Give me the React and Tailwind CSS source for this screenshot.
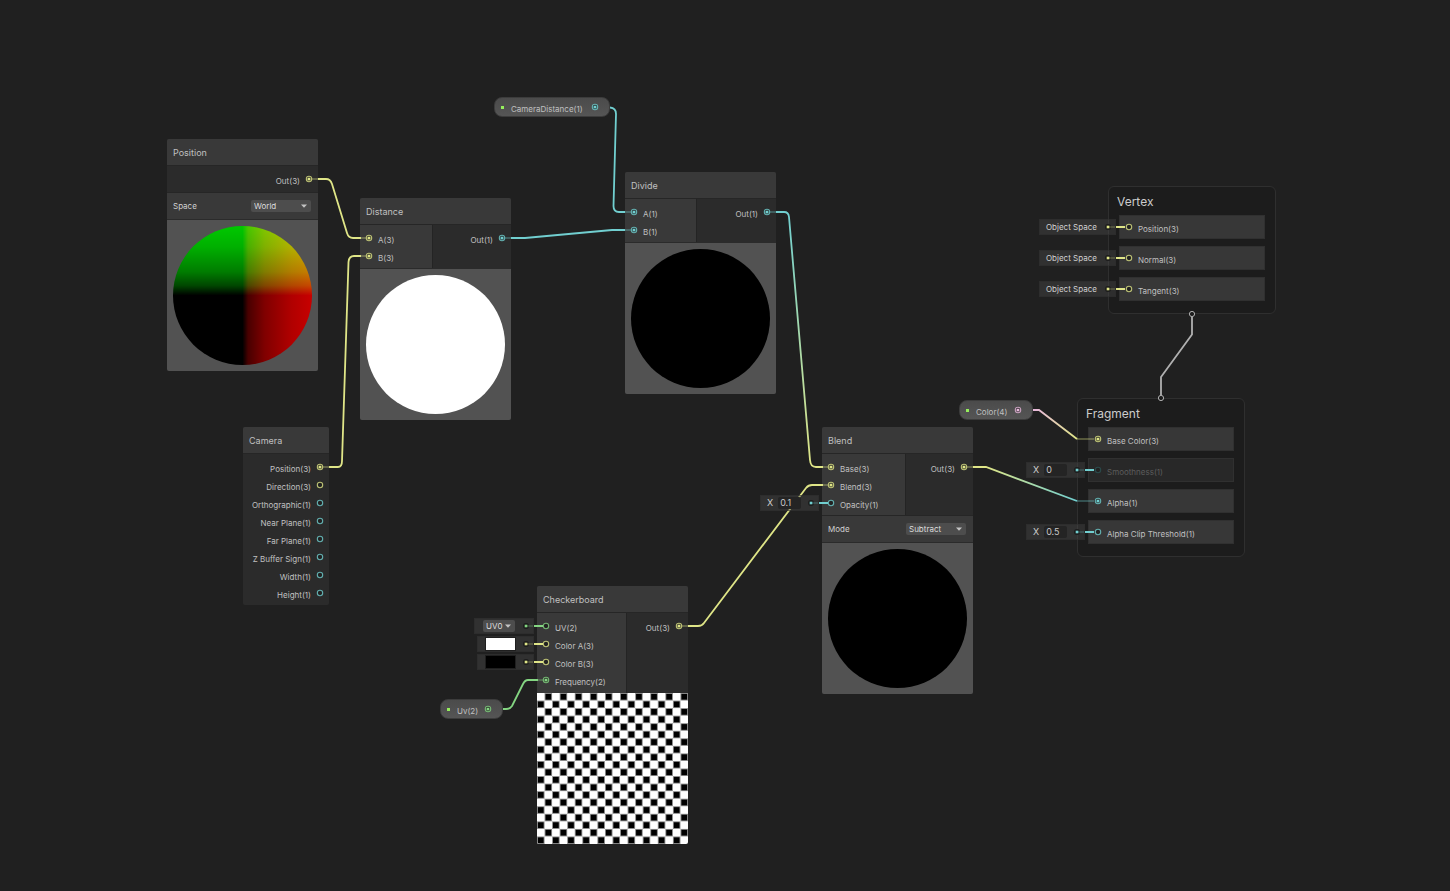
import React from "react";

const COLORS = {
  yellow: "#dfe587",
  teal: "#71cfd0",
  green: "#84d682",
  pink: "#e9b9dd",
};

function PortDot({ color, state = "open" }) {
  return (
    <svg viewBox="0 0 8 8" className="size-2 shrink-0">
      <circle
        cx="4"
        cy="4"
        r="2.7"
        fill="#222222"
        stroke={state === "off" ? "#2b4a4b" : COLORS[color]}
        strokeWidth="1.1"
        strokeOpacity={state === "off" ? 1 : 0.8}
      />
      {state === "linked" && <circle cx="4" cy="4" r="1.6" fill={COLORS[color]} />}
    </svg>
  );
}

function InPort({ label, color, state }) {
  return (
    <div className="flex h-[18px] items-center gap-[5px] pl-[5px]">
      <PortDot color={color} state={state} />
      <span className="pt-[3px] leading-3">{label}</span>
    </div>
  );
}

function OutPort({ label, color, state }) {
  return (
    <div className="flex h-[18px] items-center justify-end gap-[5px] pr-[5px]">
      <span className="pt-[3px] leading-3">{label}</span>
      <PortDot color={color} state={state} />
    </div>
  );
}

function Dropdown({ id, label, options, className }) {
  return (
    <span className="relative flex">
      <select
        id={id}
        aria-label={label}
        className={`h-3 appearance-none rounded-xs bg-[#4d4d4d] pl-[3px] text-[8px] leading-3 text-[#dcdcdc] outline-none ${className}`}
      >
        {options.map((option) => (
          <option key={option}>{option}</option>
        ))}
      </select>
      <svg viewBox="0 0 6 4" className="pointer-events-none absolute top-1 right-1 h-1 w-1.5">
        <path d="M0 0.5h6L3 3.8z" fill="#c4c4c4" />
      </svg>
    </span>
  );
}

function Node({ title, place, width = "w-[151px]", split, inputs = [], outputs = [], portsHeight = "", field, children }) {
  return (
    <section className={`absolute ${place} ${width} overflow-hidden rounded-xs bg-[#2b2b2b] text-[8px] text-[#c0c0c0]`}>
      <h2 className="flex h-[27px] items-center border-b border-[#262626] bg-[#393939] px-1.5 pt-px text-[9px]">
        {title}
      </h2>
      <div className={`flex ${portsHeight}`}>
        {inputs.length > 0 && (
          <div className={`shrink-0 border-r border-[#242424] bg-[#393939] pt-1 pb-[3px] ${split}`}>
            {inputs.map((port) => (
              <InPort key={port.label} {...port} />
            ))}
          </div>
        )}
        <div className="grow pt-1 pb-[3px]">
          {outputs.map((port) => (
            <OutPort key={port.label} {...port} />
          ))}
        </div>
      </div>
      {field && (
        <div className="flex h-[27px] items-center justify-between border-t border-[#262626] bg-[#393939] pr-[7px] pl-1.5 text-[#d0d0d0]">
          <label htmlFor={field.id}>{field.label}</label>
          <Dropdown id={field.id} options={field.options} className="w-[60px]" />
        </div>
      )}
      {children}
    </section>
  );
}

function Preview({ className }) {
  return (
    <div className="flex h-[152px] items-center justify-center border-t border-[#2b2b2b] bg-[#525252]">
      <div className={`size-[139px] rounded-full ${className}`} />
    </div>
  );
}

function CheckerPreview() {
  return (
    <svg className="block h-[151px] w-full bg-white">
      <defs>
        <pattern id="checker" width="15.1" height="15.1" patternUnits="userSpaceOnUse">
          <g stroke="#8a8a8a" strokeWidth="0.8">
            <rect x="8.1" y="0.5" width="6.6" height="6.6" />
            <rect x="0.5" y="8.1" width="6.6" height="6.6" />
          </g>
        </pattern>
      </defs>
      <rect width="100%" height="100%" fill="url(#checker)" />
    </svg>
  );
}

function Pill({ label, color, place, width }) {
  return (
    <div
      className={`absolute ${place} ${width} flex h-5 items-center justify-between rounded-lg border border-[#3c3c3c] bg-linear-to-b from-[#4b4b4b] to-[#555555] pr-2.5 pl-1.5 text-[8px] text-[#c0c0c0]`}
    >
      <span className="flex items-center gap-[7px]">
        <span className="size-[3px] bg-[#95ee5c]" />
        <span className="pt-[3px] leading-3">{label}</span>
      </span>
      <PortDot color={color} state="linked" />
    </div>
  );
}

// Inline value box that feeds an unconnected input from the left.
function Widget({ place, width, color, children }) {
  return (
    <div className={`absolute ${place} flex items-center`}>
      <div
        className={`flex h-4 items-center justify-between border border-[#2a2a2a]/50 bg-[#4c4c4c]/40 text-[8px] text-[#d0d0d0] ${width}`}
      >
        {children}
        <svg viewBox="0 0 10 6" className="h-1.5 w-2.5 shrink-0">
          <circle cx="3" cy="3" r="3" fill="#1c1c1c" />
          <path d="M4 3h6" stroke={COLORS[color]} strokeWidth="1" opacity="0.4" />
          <rect x="1.7" y="1.7" width="2.6" height="2.6" fill={COLORS[color]} />
        </svg>
      </div>
      <svg viewBox="0 0 9 2" className="h-0.5 w-[9px]">
        <path d="M0 1h9" stroke={COLORS[color]} strokeWidth="2" />
      </svg>
    </div>
  );
}

function NumberWidget({ place, label, value }) {
  return (
    <Widget place={place} width="w-[59px] pl-1.5" color="teal">
      <label className="flex items-center gap-[5px] text-[9px]">
        X
        <input
          aria-label={label}
          defaultValue={value}
          className="h-3 w-[23px] rounded-xs bg-[#242424] pl-0.5 text-[9px] leading-3 text-[#c8c8c8] outline-none"
        />
      </label>
    </Widget>
  );
}

function SpaceWidget({ place }) {
  return (
    <Widget place={place} width="w-[77px] pl-1.5" color="yellow">
      <span>Object Space</span>
    </Widget>
  );
}

function Block({ title, place, rows }) {
  return (
    <section className={`absolute ${place} w-[168px] rounded-md border border-[#2f2f2f] bg-[#1c1c1c] px-2.5 pb-3`}>
      <h2 className="-ml-0.5 flex h-7 items-center pt-0.5 text-[12px] text-[#cccccc]">{title}</h2>
      <div className="flex flex-col gap-[7px] text-[8px] text-[#c0c0c0]">
        {rows.map((row) => (
          <div
            key={row.label}
            className={`flex h-6 items-center border border-[#303030] ${
              row.state === "off" ? "bg-[#282828] text-[#5c5c5c]" : "bg-[#373737]"
            }`}
          >
            <InPort {...row} />
          </div>
        ))}
      </div>
    </section>
  );
}

const EDGES = [
  { color: COLORS.yellow, d: "M318 179H326Q330.5 179 332 184L347 233Q348.5 238 353 238H361" },
  { color: COLORS.yellow, d: "M329 467H338Q342 467 342 461L348.5 262Q349 256 354 256H361" },
  { color: COLORS.teal, d: "M511 238H525L612 230H625" },
  { color: COLORS.teal, d: "M610 107.5Q616 108 616 114L613.5 206Q613.5 212 619 212H625" },
  { color: "url(#tealToYellow)", d: "M776 212H784Q788.5 212 789 217L810 460Q810.5 467 816 467H823" },
  { color: COLORS.yellow, d: "M688 626H698Q702 626 704 623L806 488Q808.500 485 812 485H823" },
  { color: COLORS.green, d: "M503 709H506Q510 709 512 706L523 684Q525 680 528 680H538" },
  { color: "url(#pinkToYellow)", d: "M1033 410H1039L1077 439" },
  { color: "url(#yellowToTeal)", d: "M973 467H986L1077 501" },
];

// The part of an edge that runs across a node, up to its port.
const STUBS = [
  { color: COLORS.yellow, d: "M312 179H318M361 238H366M361 256H366M323 467H329" },
  { color: COLORS.teal, d: "M505 238H511M625 230H631M625 212H631M770 212H776M1077 501H1094" },
  { color: COLORS.yellow, d: "M823 467H828M823 485H828M682 626H688M967 467H973M1077 439H1094" },
  { color: COLORS.green, d: "M538 680H543" },
];

function Edges() {
  return (
    <svg className="pointer-events-none absolute inset-0 h-full w-full" fill="none">
      <defs>
        <linearGradient id="tealToYellow" gradientUnits="userSpaceOnUse" x1="789" y1="212" x2="810" y2="467">
          <stop offset="0" stopColor={COLORS.teal} />
          <stop offset="1" stopColor={COLORS.yellow} />
        </linearGradient>
        <linearGradient id="pinkToYellow" gradientUnits="userSpaceOnUse" x1="1033" y1="410" x2="1077" y2="438">
          <stop offset="0" stopColor={COLORS.pink} />
          <stop offset="1" stopColor={COLORS.yellow} />
        </linearGradient>
        <linearGradient id="yellowToTeal" gradientUnits="userSpaceOnUse" x1="986" y1="466" x2="1077" y2="500">
          <stop offset="0" stopColor={COLORS.yellow} />
          <stop offset="1" stopColor={COLORS.teal} />
        </linearGradient>
      </defs>
      {EDGES.map((edge) => (
        <path key={edge.d} d={edge.d} stroke={edge.color} strokeWidth="1.8" />
      ))}
      {STUBS.map((stub) => (
        <path key={stub.d} d={stub.d} stroke={stub.color} strokeWidth="1.6" className="opacity-40" />
      ))}
      <g stroke="#b0b0b0">
        <path d="M1192 317V334.5L1161 377V395" strokeWidth="1.8" />
        <circle cx="1192" cy="314" r="2.6" fill="#1c1c1c" />
        <circle cx="1161" cy="398" r="2.6" fill="#1c1c1c" />
      </g>
    </svg>
  );
}

export default function App() {
  return (
    <main className="relative min-h-screen w-full overflow-hidden bg-[#202020] font-['Inter',sans-serif]">
      <Node
        title="Position"
        place="top-[139px] left-[167px]"
        portsHeight="min-h-[26px]"
        outputs={[{ label: "Out(3)", color: "yellow", state: "linked" }]}
        field={{ id: "space", label: "Space", options: ["World", "Object", "View", "Tangent"] }}
      >
        <Preview className="bg-[linear-gradient(to_bottom,#00c800,#00b000_15%,#007c00_33%,#004600_43%,#000_50%),linear-gradient(to_right,#000_50%,#480000_54%,#800000_66%,#b00000_85%,#c80000)] bg-blend-screen" />
      </Node>

      <Node
        title="Distance"
        place="top-[198px] left-[360px]"
        split="w-[73px]"
        inputs={[
          { label: "A(3)", color: "yellow", state: "linked" },
          { label: "B(3)", color: "yellow", state: "linked" },
        ]}
        outputs={[{ label: "Out(1)", color: "teal", state: "linked" }]}
      >
        <Preview className="bg-white" />
      </Node>

      <Node
        title="Divide"
        place="top-[172px] left-[625px]"
        split="w-[72px]"
        inputs={[
          { label: "A(1)", color: "teal", state: "linked" },
          { label: "B(1)", color: "teal", state: "linked" },
        ]}
        outputs={[{ label: "Out(1)", color: "teal", state: "linked" }]}
      >
        <Preview className="bg-black" />
      </Node>

      <Node
        title="Camera"
        place="top-[427px] left-[243px]"
        width="w-[86px]"
        outputs={[
          { label: "Position(3)", color: "yellow", state: "linked" },
          { label: "Direction(3)", color: "yellow" },
          { label: "Orthographic(1)", color: "teal" },
          { label: "Near Plane(1)", color: "teal" },
          { label: "Far Plane(1)", color: "teal" },
          { label: "Z Buffer Sign(1)", color: "teal" },
          { label: "Width(1)", color: "teal" },
          { label: "Height(1)", color: "teal" },
        ]}
      />

      <Node
        title="Blend"
        place="top-[427px] left-[822px]"
        split="w-[84px]"
        inputs={[
          { label: "Base(3)", color: "yellow", state: "linked" },
          { label: "Blend(3)", color: "yellow", state: "linked" },
          { label: "Opacity(1)", color: "teal" },
        ]}
        outputs={[{ label: "Out(3)", color: "yellow", state: "linked" }]}
        field={{ id: "mode", label: "Mode", options: ["Subtract", "Multiply", "Overlay", "Screen"] }}
      >
        <Preview className="bg-black" />
      </Node>

      <Node
        title="Checkerboard"
        place="top-[586px] left-[537px]"
        split="w-[90px]"
        portsHeight="min-h-20"
        inputs={[
          { label: "UV(2)", color: "green" },
          { label: "Color A(3)", color: "yellow" },
          { label: "Color B(3)", color: "yellow" },
          { label: "Frequency(2)", color: "green", state: "linked" },
        ]}
        outputs={[{ label: "Out(3)", color: "yellow", state: "linked" }]}
      >
        <CheckerPreview />
      </Node>

      <Block
        title="Vertex"
        place="top-[186px] left-[1108px]"
        rows={[
          { label: "Position(3)", color: "yellow" },
          { label: "Normal(3)", color: "yellow" },
          { label: "Tangent(3)", color: "yellow" },
        ]}
      />
      <Block
        title="Fragment"
        place="top-[398px] left-[1077px]"
        rows={[
          { label: "Base Color(3)", color: "yellow", state: "linked" },
          { label: "Smoothness(1)", color: "teal", state: "off" },
          { label: "Alpha(1)", color: "teal", state: "linked" },
          { label: "Alpha Clip Threshold(1)", color: "teal" },
        ]}
      />

      <Edges />

      <Pill label="CameraDistance(1)" color="teal" place="top-[97px] left-[494px]" width="w-[116px]" />
      <Pill label="Uv(2)" color="green" place="top-[699px] left-[440px]" width="w-[63px]" />
      <Pill label="Color(4)" color="pink" place="top-[400px] left-[959px]" width="w-[74px]" />

      <SpaceWidget place="top-[219px] left-[1039px]" />
      <SpaceWidget place="top-[250px] left-[1039px]" />
      <SpaceWidget place="top-[281px] left-[1039px]" />

      <NumberWidget place="top-[495px] left-[760px]" label="Opacity" value="0.1" />
      <NumberWidget place="top-[462px] left-[1026px]" label="Smoothness" value="0" />
      <NumberWidget place="top-[524px] left-[1026px]" label="Alpha Clip Threshold" value="0.5" />

      <Widget place="top-[618px] left-[474px]" width="w-[60px] pl-2" color="green">
        <Dropdown label="UV channel" options={["UV0", "UV1", "UV2", "UV3"]} className="w-8" />
      </Widget>
      <Widget place="top-[636px] left-[477px]" width="w-[57px] pl-[7px]" color="yellow">
        <button aria-label="Color A" className="h-3.5 w-[31px] border border-[#1f1f1f] bg-white" />
      </Widget>
      <Widget place="top-[654px] left-[477px]" width="w-[57px] pl-[7px]" color="yellow">
        <button aria-label="Color B" className="h-3.5 w-[31px] border border-[#1f1f1f] bg-black" />
      </Widget>
    </main>
  );
}
